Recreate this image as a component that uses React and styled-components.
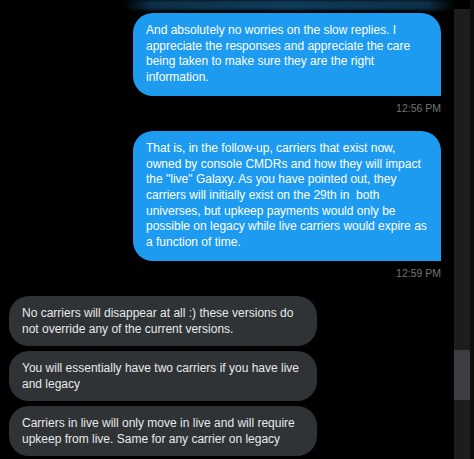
import React from "react";
import styled, { createGlobalStyle } from "styled-components";

const GlobalStyle = createGlobalStyle`
  html, body {
    margin: 0;
    padding: 0;
    background: #000;
    overflow: hidden;
  }
  body {
    font-family: "Liberation Sans", Arial, sans-serif;
  }
`;

const Page = styled.div`
  display: flex;
  width: 474px;
  height: 459px;
  background: #000;
  overflow: hidden;
`;

const Main = styled.div`
  width: 454px;
  display: flex;
  flex-direction: column;
`;

const Header = styled.div`
  height: 10px;
  flex: none;
  display: flex;
  justify-content: flex-end;
`;

const Glow = styled.div`
  width: 330px;
  height: 10px;
  background: linear-gradient(
    90deg,
    rgba(0, 0, 0, 0) 0%,
    #0c2f47 8%,
    #0f3b5a 50%,
    #0c2f47 92%,
    rgba(0, 0, 0, 0) 100%
  );
  filter: blur(1.5px);
`;

const Thread = styled.div`
  display: flex;
  flex-direction: column;
  padding: 3px 13px 0 9px;
`;

const Bubble = styled.div`
  width: 308px;
  box-sizing: border-box;
  padding: ${(p) => (p.$sent ? "10px 13px" : "9px 13px")};
  border-radius: ${(p) => (p.$sent ? "20px 20px 0 20px" : "20px")};
  background: ${(p) => (p.$sent ? "#1d9bf0" : "#2f3336")};
  color: ${(p) => (p.$sent ? "#ffffff" : "#e7e9ea")};
  align-self: ${(p) => (p.$sent ? "flex-end" : "flex-start")};
  font-size: 12px;
  line-height: ${(p) => (p.$sent ? "15.7px" : "16px")};
  white-space: nowrap;
  & + & {
    margin-top: 5px;
  }
`;

const Time = styled.div`
  align-self: flex-end;
  margin-top: 5px;
  margin-bottom: 16px;
  font-size: 10.5px;
  line-height: 14px;
  color: #71767b;
`;

const Scrollbar = styled.div`
  width: 16px;
  margin-top: 9px;
  background: #1c1d1f;
  display: flex;
  flex-direction: column;
  padding-top: 341px;
  box-sizing: border-box;
`;

const Thumb = styled.div`
  height: 50px;
  background: #3c3e41;
`;

const Edge = styled.div`
  width: 4px;
  background: #0d0d0e;
`;

const Lines = ({ lines }) =>
  lines.map((l, i) => (
    <React.Fragment key={i}>
      {l}
      {i < lines.length - 1 && <br />}
    </React.Fragment>
  ));

const messages = [
  {
    sent: true,
    time: "12:56 PM",
    lines: [
      "And absolutely no worries on the slow replies. I",
      "appreciate the responses and appreciate the care",
      "being taken to make sure they are the right",
      "information.",
    ],
  },
  {
    sent: true,
    time: "12:59 PM",
    lines: [
      "That is, in the follow-up, carriers that exist now,",
      "owned by console CMDRs and how they will impact",
      "the \"live\" Galaxy. As you have pointed out, they",
      "carriers will initially exist on the 29th in\u00a0 both",
      "universes, but upkeep payments would only be",
      "possible on legacy while live carriers would expire as",
      "a function of time.",
    ],
  },
  {
    sent: false,
    lines: [
      "No carriers will disappear at all :) these versions do",
      "not override any of the current versions.",
    ],
  },
  {
    sent: false,
    lines: ["You will essentially have two carriers if you have live", "and legacy"],
  },
  {
    sent: false,
    lines: [
      "Carriers in live will only move in live and will require",
      "upkeep from live. Same for any carrier on legacy",
    ],
  },
];

export default function App() {
  return (
    <>
      <GlobalStyle />
      <Page>
        <Main>
          <Header>
            <Glow />
          </Header>
          <Thread>
            {messages.map((m, i) => (
              <React.Fragment key={i}>
                <Bubble $sent={m.sent}>
                  <Lines lines={m.lines} />
                </Bubble>
                {m.time && <Time>{m.time}</Time>}
              </React.Fragment>
            ))}
          </Thread>
        </Main>
        <Scrollbar>
          <Thumb />
        </Scrollbar>
        <Edge />
      </Page>
    </>
  );
}
